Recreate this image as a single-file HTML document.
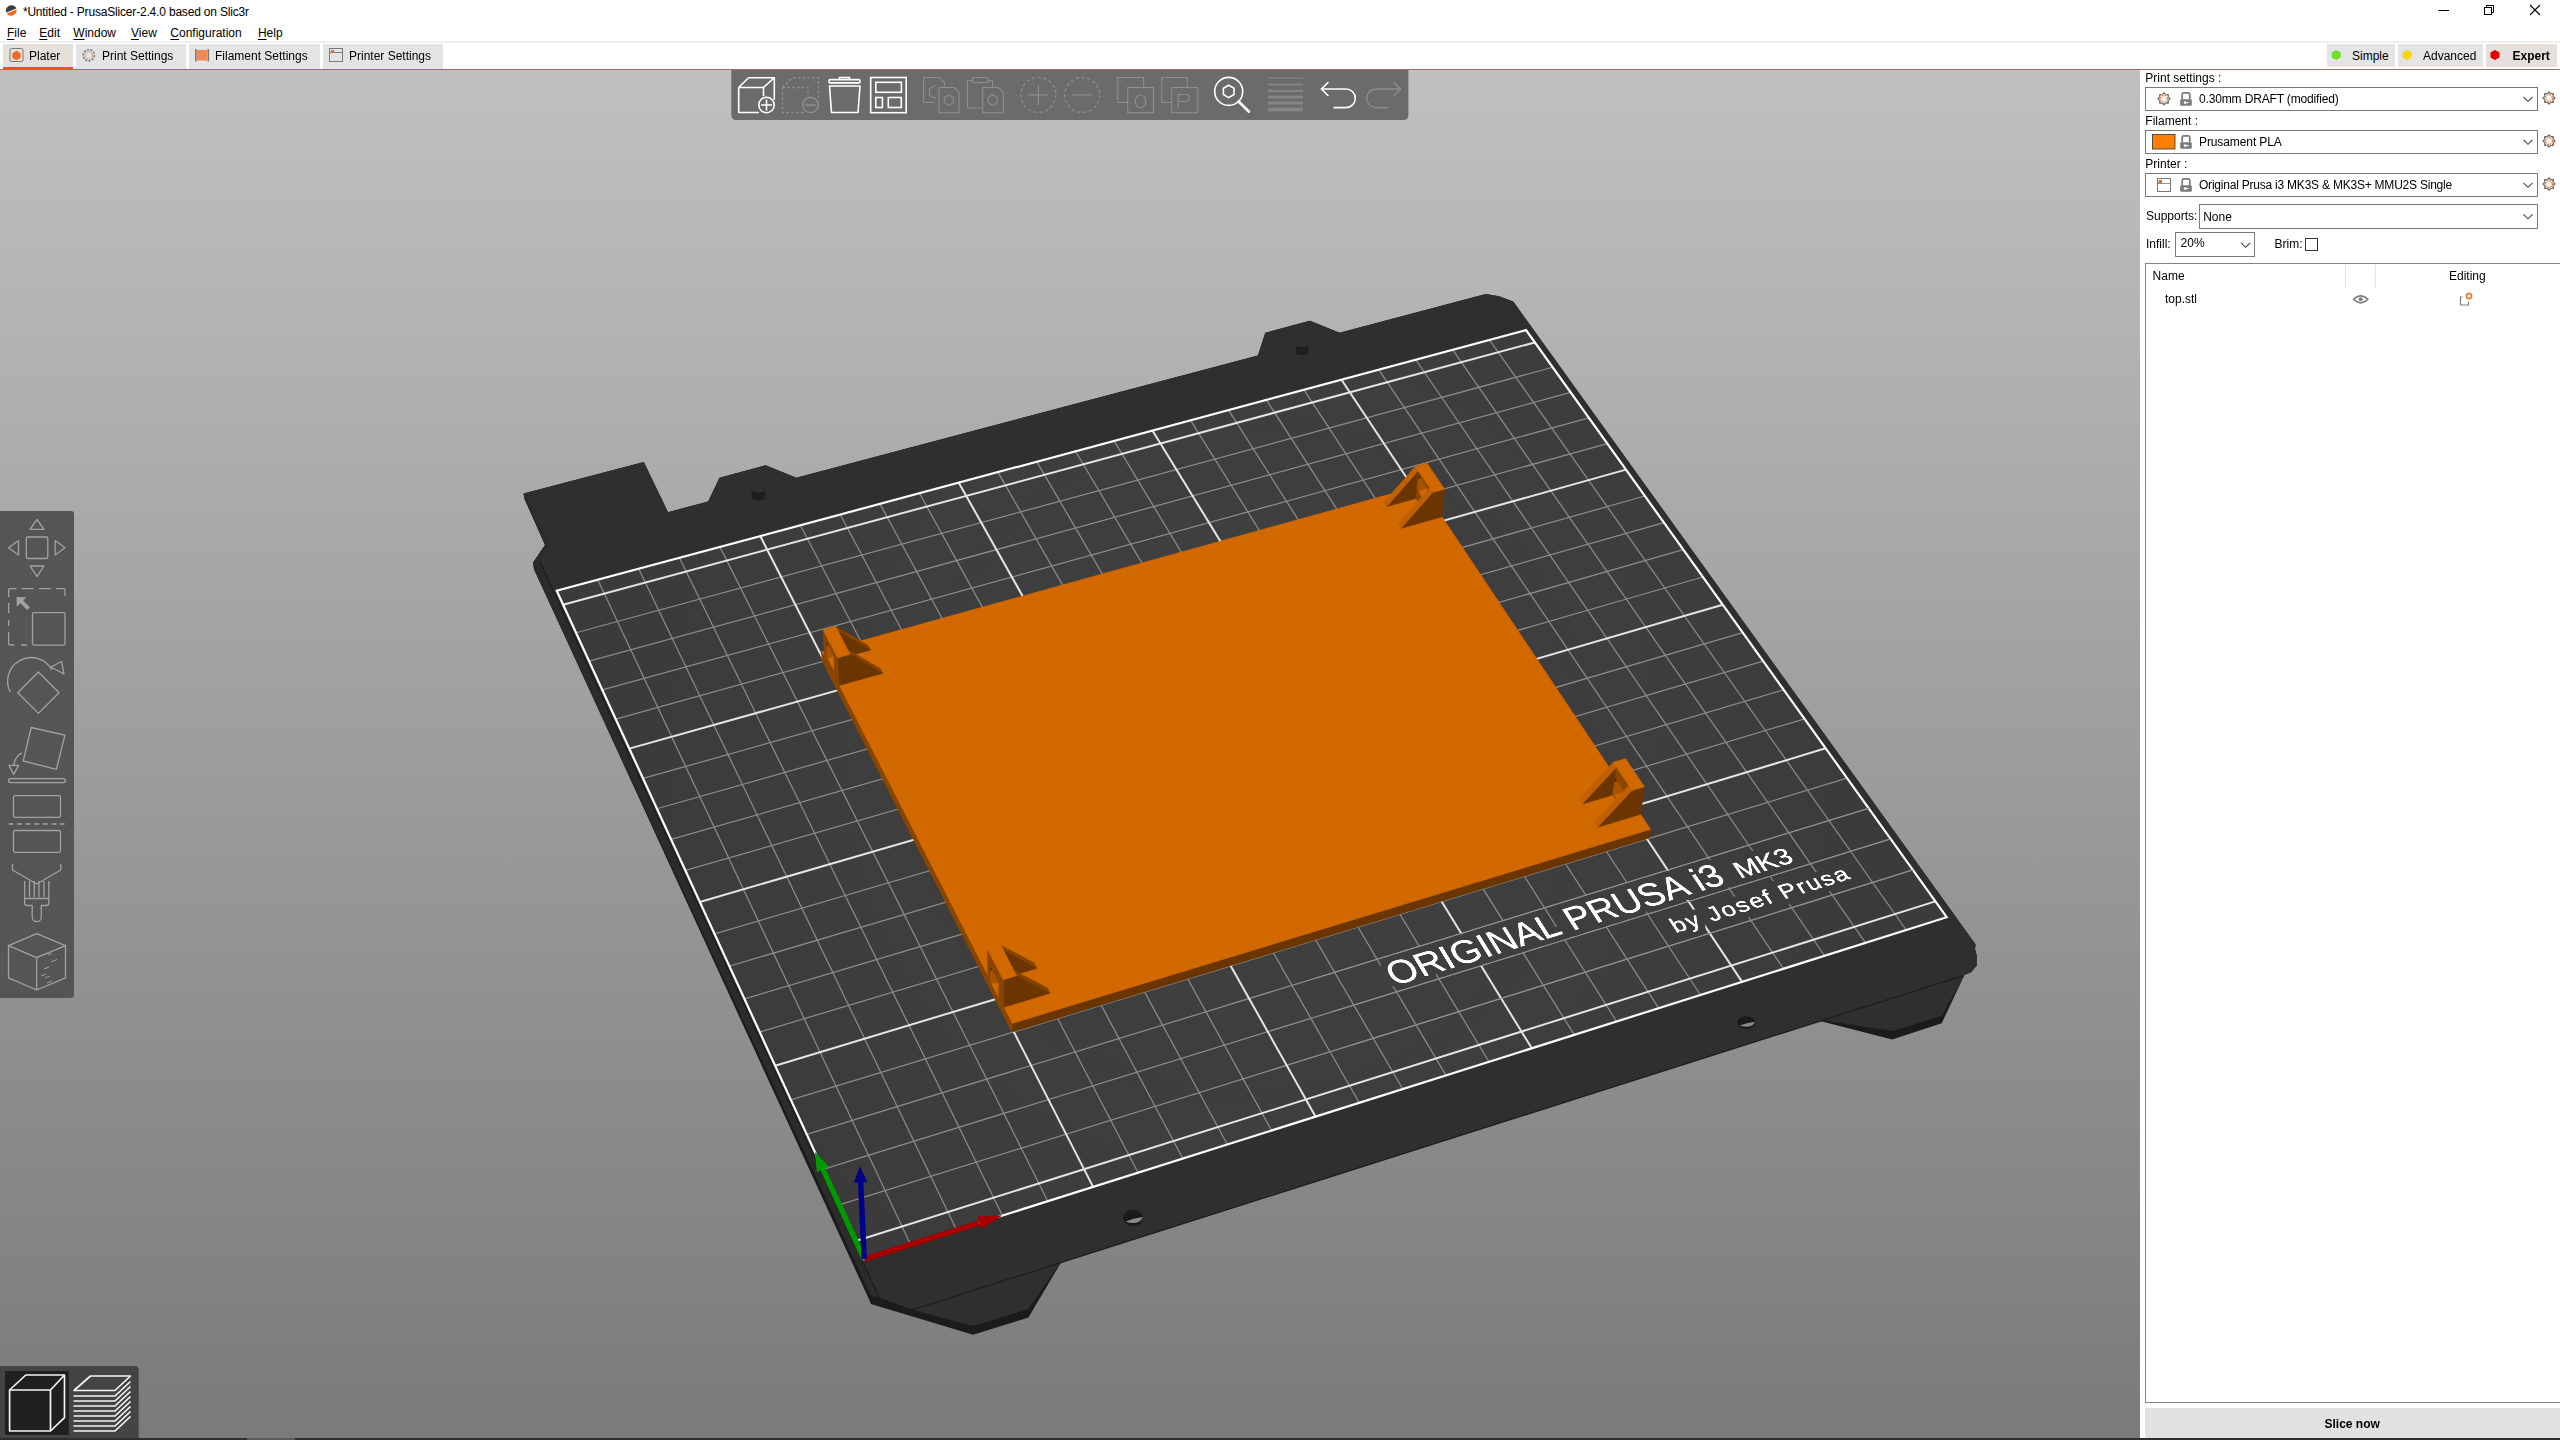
<!DOCTYPE html>
<html><head><meta charset="utf-8">
<style>
html,body{margin:0;padding:0;width:2560px;height:1440px;overflow:hidden;background:#fff;font-family:"Liberation Sans",sans-serif;font-size:12px;color:#000}
.abs{position:absolute}
.t{position:absolute;white-space:nowrap;line-height:1.117;color:#000}
u{text-decoration:underline;text-underline-offset:1.5px}
</style></head><body>
<div style="position:absolute;left:0;top:0;width:2140px;height:1440px;overflow:hidden">
<svg width="2140" height="1370" viewBox="0 70 2140 1370" style="position:absolute;left:0;top:70px">
<defs><linearGradient id="bg" x1="0" y1="0" x2="0" y2="1"><stop offset="0" stop-color="#c0c0c0"/><stop offset="1" stop-color="#7a7a7a"/></linearGradient><radialGradient id="spec" gradientUnits="userSpaceOnUse" cx="1250" cy="760" r="700"><stop offset="0" stop-color="#fff" stop-opacity="0.035"/><stop offset="1" stop-color="#fff" stop-opacity="0"/></radialGradient></defs>
<rect x="0" y="70" width="2140" height="1370" fill="url(#bg)"/>
<polygon points="523.6,493.5 643.8,461.9 668.0,512.2 708.2,501.4 719.5,477.8 765.6,465.3 796.3,477.8 1257.9,355.4 1265.3,332.7 1309.9,320.8 1339.6,332.7 1485.8,294.1 1499.1,296.3 1513.2,301.5 1975.6,944.4 1975.0,948.9 1976.7,955.6 1976.7,965.6 1971.1,972.2 1964.4,975.0 1941.7,1023.3 1892.2,1039.4 1820.0,1021.1 1061.2,1262.2 1028.4,1317.5 973.1,1334.8 870.9,1303.9 870.0,1301.6 534.0,569.2 533.3,562.2 545.1,544.9 524.3,498.3" fill="#1b1b1b"/>
<polygon points="523.6,493.5 643.8,461.9 668.0,512.2 708.2,501.4 719.5,477.8 765.6,465.3 796.3,477.8 1257.9,355.4 1265.3,332.7 1309.9,320.8 1339.6,332.7 1485.8,294.1 1499.1,296.3 1513.2,301.5 1975.6,944.4 1975.0,948.9 1976.7,955.6 1976.7,965.6 1971.1,972.2 1964.4,975.0 1942.2,1015.6 1893.3,1031.1 1822.2,1020.2 1060.3,1263.1 1028.4,1309.0 973.1,1326.0 913.0,1310.0 879.4,1297.8 870.9,1295.5 534.0,569.2 533.3,562.2 545.1,544.9 524.3,498.3" fill="#2f2f2f"/>
<polygon points="524.3,498.3 545.1,544.9 533.3,562.2 534.0,569.2 870.9,1295.5 879.4,1297.8 539.6,560.8 549.0,546.0 527.0,497.0" fill="#2b2b2b"/>
<polyline points="539.6,560.8 879.4,1297.8 886.9,1304.4 905.6,1310.0 915.0,1309.0 1963.3,975.6" fill="none" stroke="#1d1d1d" stroke-width="1.2"/>
<path d="M751.7,490 L751.7,497.8 A6.649999999999977,2.5 0 0 0 765,497.8 L765,490 Z" fill="#1e1e1e"/>
<ellipse cx="758.35" cy="490" rx="6.649999999999977" ry="2.2" fill="#303030"/>
<path d="M1295.8,345 L1295.8,352.5 A6.300000000000068,2.5 0 0 0 1308.4,352.5 L1308.4,345 Z" fill="#1e1e1e"/>
<ellipse cx="1302.1" cy="345" rx="6.300000000000068" ry="2.2" fill="#303030"/>
<ellipse cx="1133" cy="1217.8" rx="10" ry="8" fill="#1a1a1a"/>
<path d="M1125.5,1221.3999999999999 Q1133,1218.2 1143,1217.0 Q1139.0,1226.2 1125.5,1221.3999999999999 Z" fill="#8a8a8a"/>
<ellipse cx="1746.3" cy="1022.5" rx="9" ry="6.5" fill="#1a1a1a"/>
<path d="M1739.55,1025.425 Q1746.3,1022.825 1755.3,1021.85 Q1751.7,1029.325 1739.55,1025.425 Z" fill="#8a8a8a"/>
<polygon points="864.2,1259.2 1946.7,917.2 1526.0,330.1 556.7,590.8" fill="#3b3b3b"/>
<g><line x1="910.51" y1="1244.57" x2="597.82" y2="579.74" stroke="#8a8a8a" stroke-width="1.25"/><line x1="956.55" y1="1230.02" x2="638.73" y2="568.74" stroke="#8a8a8a" stroke-width="1.25"/><line x1="1002.33" y1="1215.56" x2="679.44" y2="557.79" stroke="#8a8a8a" stroke-width="1.25"/><line x1="1047.84" y1="1201.18" x2="719.94" y2="546.89" stroke="#8a8a8a" stroke-width="1.25"/><line x1="1138.09" y1="1172.67" x2="800.35" y2="525.27" stroke="#8a8a8a" stroke-width="1.25"/><line x1="1182.83" y1="1158.53" x2="840.25" y2="514.54" stroke="#8a8a8a" stroke-width="1.25"/><line x1="1227.32" y1="1144.48" x2="879.95" y2="503.86" stroke="#8a8a8a" stroke-width="1.25"/><line x1="1271.55" y1="1130.50" x2="919.46" y2="493.23" stroke="#8a8a8a" stroke-width="1.25"/><line x1="1359.27" y1="1102.79" x2="997.89" y2="472.14" stroke="#8a8a8a" stroke-width="1.25"/><line x1="1402.76" y1="1089.05" x2="1036.81" y2="461.67" stroke="#8a8a8a" stroke-width="1.25"/><line x1="1446.01" y1="1075.39" x2="1075.55" y2="451.25" stroke="#8a8a8a" stroke-width="1.25"/><line x1="1489.01" y1="1061.80" x2="1114.10" y2="440.88" stroke="#8a8a8a" stroke-width="1.25"/><line x1="1574.31" y1="1034.85" x2="1190.63" y2="420.30" stroke="#8a8a8a" stroke-width="1.25"/><line x1="1616.60" y1="1021.49" x2="1228.61" y2="410.08" stroke="#8a8a8a" stroke-width="1.25"/><line x1="1658.66" y1="1008.20" x2="1266.42" y2="399.92" stroke="#8a8a8a" stroke-width="1.25"/><line x1="1700.49" y1="994.99" x2="1304.04" y2="389.80" stroke="#8a8a8a" stroke-width="1.25"/><line x1="1783.46" y1="968.77" x2="1378.74" y2="369.71" stroke="#8a8a8a" stroke-width="1.25"/><line x1="1824.60" y1="955.77" x2="1415.82" y2="359.73" stroke="#8a8a8a" stroke-width="1.25"/><line x1="1865.52" y1="942.85" x2="1452.72" y2="349.81" stroke="#8a8a8a" stroke-width="1.25"/><line x1="1906.22" y1="929.99" x2="1489.45" y2="339.93" stroke="#8a8a8a" stroke-width="1.25"/><line x1="839.24" y1="1204.95" x2="1912.83" y2="869.93" stroke="#8a8a8a" stroke-width="1.25"/><line x1="822.89" y1="1169.41" x2="1890.62" y2="838.93" stroke="#8a8a8a" stroke-width="1.25"/><line x1="806.77" y1="1134.36" x2="1868.69" y2="808.33" stroke="#8a8a8a" stroke-width="1.25"/><line x1="790.87" y1="1099.80" x2="1847.04" y2="778.12" stroke="#8a8a8a" stroke-width="1.25"/><line x1="759.70" y1="1032.06" x2="1804.56" y2="718.84" stroke="#8a8a8a" stroke-width="1.25"/><line x1="744.43" y1="998.87" x2="1783.72" y2="689.76" stroke="#8a8a8a" stroke-width="1.25"/><line x1="729.37" y1="966.13" x2="1763.15" y2="661.04" stroke="#8a8a8a" stroke-width="1.25"/><line x1="714.51" y1="933.82" x2="1742.82" y2="632.68" stroke="#8a8a8a" stroke-width="1.25"/><line x1="685.36" y1="870.46" x2="1702.92" y2="577.00" stroke="#8a8a8a" stroke-width="1.25"/><line x1="671.07" y1="839.40" x2="1683.33" y2="549.67" stroke="#8a8a8a" stroke-width="1.25"/><line x1="656.96" y1="808.74" x2="1663.99" y2="522.66" stroke="#8a8a8a" stroke-width="1.25"/><line x1="643.04" y1="778.47" x2="1644.87" y2="495.98" stroke="#8a8a8a" stroke-width="1.25"/><line x1="615.72" y1="719.08" x2="1607.32" y2="443.58" stroke="#8a8a8a" stroke-width="1.25"/><line x1="602.31" y1="689.95" x2="1588.87" y2="417.84" stroke="#8a8a8a" stroke-width="1.25"/><line x1="589.08" y1="661.18" x2="1570.65" y2="392.40" stroke="#8a8a8a" stroke-width="1.25"/><line x1="576.01" y1="632.76" x2="1552.63" y2="367.26" stroke="#8a8a8a" stroke-width="1.25"/><line x1="1093.10" y1="1186.88" x2="760.25" y2="536.05" stroke="#e4e4e4" stroke-width="2.0"/><line x1="1315.53" y1="1116.61" x2="958.77" y2="482.66" stroke="#e4e4e4" stroke-width="2.0"/><line x1="1531.78" y1="1048.29" x2="1152.45" y2="430.57" stroke="#e4e4e4" stroke-width="2.0"/><line x1="1742.09" y1="981.84" x2="1341.48" y2="379.73" stroke="#e4e4e4" stroke-width="2.0"/><line x1="855.82" y1="1240.99" x2="1935.34" y2="901.34" stroke="#e4e4e4" stroke-width="2.0"/><line x1="775.18" y1="1065.70" x2="1825.67" y2="748.29" stroke="#e4e4e4" stroke-width="2.0"/><line x1="699.84" y1="901.93" x2="1722.75" y2="604.67" stroke="#e4e4e4" stroke-width="2.0"/><line x1="629.29" y1="748.59" x2="1625.98" y2="469.63" stroke="#e4e4e4" stroke-width="2.0"/><line x1="563.10" y1="604.70" x2="1534.83" y2="342.42" stroke="#e4e4e4" stroke-width="2.0"/></g>
<polygon points="864.2,1259.2 1946.7,917.2 1526.0,330.1 556.7,590.8" fill="none" stroke="#ffffff" stroke-width="2.2"/>
</svg>
<div style="position:absolute;left:0;top:0;width:2500px;height:2100px;transform-origin:0 0;transform:matrix3d(0.4263237603,-0.09592934385,0,2.529735277e-05,0.09327965718,0.2408440193,0,-6.150071078e-05,0,0,1,0,556.7,590.8,0,1)">
<svg width="2500" height="2100" viewBox="0 0 2500 2100">
<g font-family="Liberation Sans">
<g fill="#3b3b3b" stroke="#3b3b3b" stroke-width="34" stroke-linejoin="round">
<text x="1303" y="1833" font-size="92" textLength="800" lengthAdjust="spacingAndGlyphs">ORIGINAL PRUSA i3</text>
<text x="2136" y="1832" font-size="66" textLength="136" lengthAdjust="spacingAndGlyphs">MK3</text>
<text x="1932" y="1922" font-size="57" textLength="430" lengthAdjust="spacing">by Josef Prusa</text>
</g>
<g stroke="#8a8a8a" stroke-width="2.8">
<line x1="1150" y1="1950" x2="2500" y2="1950"/>
<line x1="1150" y1="1850" x2="2500" y2="1850"/>
<line x1="1150" y1="1750" x2="2500" y2="1750"/>
</g>
<g fill="#fff" stroke="#fff" stroke-width="1.2" stroke-linejoin="round">
<text x="1303" y="1833" font-size="92" textLength="800" lengthAdjust="spacingAndGlyphs">ORIGINAL PRUSA i3</text>
<text x="2136" y="1832" font-size="66" textLength="136" lengthAdjust="spacingAndGlyphs">MK3</text>
<text x="1932" y="1922" font-size="57" textLength="430" lengthAdjust="spacing">by Josef Prusa</text>
</g>
</g></svg></div>
<svg width="2140" height="1370" viewBox="0 70 2140 1370" style="position:absolute;left:0;top:70px">
<defs><radialGradient id="spec" gradientUnits="userSpaceOnUse" cx="1250" cy="760" r="700"><stop offset="0" stop-color="#fff" stop-opacity="0.035"/><stop offset="1" stop-color="#fff" stop-opacity="0"/></radialGradient></defs>
<polygon points="864.2,1259.2 1946.7,917.2 1526.0,330.1 556.7,590.8" fill="url(#spec)"/>
<polygon points="1011.90,1032.09 1649.29,837.98 1650.53,829.35 1011.84,1023.51" fill="#6a3500" stroke="#6a3500" stroke-width="0.7" stroke-linejoin="round"/>
<polygon points="1650.53,829.35 1011.84,1023.51 821.56,651.80 1421.11,485.61" fill="#d26900" stroke="#d26900" stroke-width="0.7" stroke-linejoin="round"/>
<polygon points="1011.84,1023.51 1011.90,1032.09 821.99,660.46 821.56,651.80" fill="#8a4500" stroke="#8a4500" stroke-width="0.7" stroke-linejoin="round"/>
<polygon points="1427.49,495.17 1386.80,506.48 1418.26,470.65 1429.83,467.45" fill="#6a3500" stroke="#6a3500" stroke-width="0.7" stroke-linejoin="round"/>
<polygon points="1386.80,506.48 1418.26,470.65 1415.41,466.39 1383.99,502.20" fill="#c06000" stroke="#c06000" stroke-width="0.7" stroke-linejoin="round"/>
<polygon points="1418.26,470.65 1429.83,467.45 1426.97,463.20 1415.41,466.39" fill="#d26900" stroke="#d26900" stroke-width="0.7" stroke-linejoin="round"/>
<polygon points="1429.90,488.04 1427.55,515.76 1415.99,498.36 1418.26,470.65" fill="#8a4500" stroke="#8a4500" stroke-width="0.7" stroke-linejoin="round"/>
<polygon points="1425.85,502.09 1417.66,489.78 1418.83,475.44 1427.06,487.74" fill="#a55300" stroke="#a55300" stroke-width="0.7" stroke-linejoin="round"/>
<polygon points="1425.14,501.01 1418.90,491.65 1426.77,488.72" fill="#cf6900" stroke="#cf6900" stroke-width="0.7" stroke-linejoin="round"/>
<polygon points="1420.26,477.57 1418.83,475.44 1418.58,478.56" fill="#4a2500" stroke="#4a2500" stroke-width="0.7" stroke-linejoin="round"/>
<polygon points="1427.55,515.76 1439.08,512.54 1441.50,484.82 1429.90,488.04" fill="#6a3500" stroke="#6a3500" stroke-width="0.7" stroke-linejoin="round"/>
<polygon points="1441.50,484.82 1429.90,488.04 1418.26,470.65 1429.83,467.45" fill="#d26900" stroke="#d26900" stroke-width="0.7" stroke-linejoin="round"/>
<polygon points="1441.95,516.84 1401.10,528.26 1432.78,492.34 1444.39,489.12" fill="#6a3500" stroke="#6a3500" stroke-width="0.7" stroke-linejoin="round"/>
<polygon points="1401.10,528.26 1432.78,492.34 1429.90,488.04 1398.26,523.94" fill="#c06000" stroke="#c06000" stroke-width="0.7" stroke-linejoin="round"/>
<polygon points="1432.78,492.34 1444.39,489.12 1441.50,484.82 1429.90,488.04" fill="#d26900" stroke="#d26900" stroke-width="0.7" stroke-linejoin="round"/>
<polygon points="870.53,649.97 837.96,630.92 835.59,626.34 868.14,645.41" fill="#864300" stroke="#864300" stroke-width="0.7" stroke-linejoin="round"/>
<polygon points="826.84,662.11 870.53,649.97 837.96,630.92 825.50,634.36" fill="#6a3500" stroke="#6a3500" stroke-width="0.7" stroke-linejoin="round"/>
<polygon points="825.50,634.36 826.84,662.11 824.49,657.53 823.13,629.77" fill="#8a4500" stroke="#8a4500" stroke-width="0.7" stroke-linejoin="round"/>
<polygon points="835.14,653.10 836.43,680.85 826.84,662.11 825.50,634.36" fill="#8a4500" stroke="#8a4500" stroke-width="0.7" stroke-linejoin="round"/>
<polygon points="834.00,669.98 827.20,656.73 826.51,642.39 833.32,655.64" fill="#a55300" stroke="#a55300" stroke-width="0.7" stroke-linejoin="round"/>
<polygon points="837.96,630.92 825.50,634.36 823.13,629.77 835.59,626.34" fill="#d26900" stroke="#d26900" stroke-width="0.7" stroke-linejoin="round"/>
<polygon points="833.40,668.83 828.24,658.74 833.23,656.60" fill="#cf6900" stroke="#cf6900" stroke-width="0.7" stroke-linejoin="round"/>
<polygon points="827.69,644.69 826.51,642.39 826.66,645.52" fill="#4a2500" stroke="#4a2500" stroke-width="0.7" stroke-linejoin="round"/>
<polygon points="882.68,673.21 850.05,654.26 847.65,649.63 880.27,668.60" fill="#864300" stroke="#864300" stroke-width="0.7" stroke-linejoin="round"/>
<polygon points="836.43,680.85 848.86,677.38 847.65,649.63 835.14,653.10" fill="#6a3500" stroke="#6a3500" stroke-width="0.7" stroke-linejoin="round"/>
<polygon points="838.80,685.48 882.68,673.21 850.05,654.26 837.53,657.73" fill="#6a3500" stroke="#6a3500" stroke-width="0.7" stroke-linejoin="round"/>
<polygon points="837.53,657.73 838.80,685.48 836.43,680.85 835.14,653.10" fill="#8a4500" stroke="#8a4500" stroke-width="0.7" stroke-linejoin="round"/>
<polygon points="847.65,649.63 835.14,653.10 825.50,634.36 837.96,630.92" fill="#d26900" stroke="#d26900" stroke-width="0.7" stroke-linejoin="round"/>
<polygon points="850.05,654.26 837.53,657.73 835.14,653.10 847.65,649.63" fill="#d26900" stroke="#d26900" stroke-width="0.7" stroke-linejoin="round"/>
<polygon points="1625.03,791.15 1582.16,804.06 1616.62,767.12 1628.81,763.48" fill="#6a3500" stroke="#6a3500" stroke-width="0.7" stroke-linejoin="round"/>
<polygon points="1582.16,804.06 1616.62,767.12 1613.37,762.27 1578.96,799.19" fill="#c06000" stroke="#c06000" stroke-width="0.7" stroke-linejoin="round"/>
<polygon points="1628.86,785.42 1625.07,813.08 1612.93,794.80 1616.62,767.12" fill="#8a4500" stroke="#8a4500" stroke-width="0.7" stroke-linejoin="round"/>
<polygon points="1622.48,806.65 1613.17,792.65 1615.08,778.37 1624.43,792.38" fill="#a55300" stroke="#a55300" stroke-width="0.7" stroke-linejoin="round"/>
<polygon points="1621.67,805.43 1614.59,794.77 1624.05,793.32" fill="#cf6900" stroke="#cf6900" stroke-width="0.7" stroke-linejoin="round"/>
<polygon points="1616.70,780.80 1615.08,778.37 1614.66,781.48" fill="#4a2500" stroke="#4a2500" stroke-width="0.7" stroke-linejoin="round"/>
<polygon points="1616.62,767.12 1628.81,763.48 1625.55,758.63 1613.37,762.27" fill="#d26900" stroke="#d26900" stroke-width="0.7" stroke-linejoin="round"/>
<polygon points="1625.07,813.08 1637.22,809.41 1641.09,781.75 1628.86,785.42" fill="#6a3500" stroke="#6a3500" stroke-width="0.7" stroke-linejoin="round"/>
<polygon points="1641.09,781.75 1628.86,785.42 1616.62,767.12 1628.81,763.48" fill="#d26900" stroke="#d26900" stroke-width="0.7" stroke-linejoin="round"/>
<polygon points="1640.49,814.30 1597.44,827.34 1632.14,790.32 1644.38,786.64" fill="#6a3500" stroke="#6a3500" stroke-width="0.7" stroke-linejoin="round"/>
<polygon points="1597.44,827.34 1632.14,790.32 1628.86,785.42 1594.21,822.42" fill="#c06000" stroke="#c06000" stroke-width="0.7" stroke-linejoin="round"/>
<polygon points="1632.14,790.32 1644.38,786.64 1641.09,781.75 1628.86,785.42" fill="#d26900" stroke="#d26900" stroke-width="0.7" stroke-linejoin="round"/>
<polygon points="1036.89,968.18 1003.51,950.59 1000.79,945.35 1034.16,962.95" fill="#864300" stroke="#864300" stroke-width="0.7" stroke-linejoin="round"/>
<polygon points="990.64,982.10 1036.89,968.18 1003.51,950.59 990.30,954.55" fill="#6a3500" stroke="#6a3500" stroke-width="0.7" stroke-linejoin="round"/>
<polygon points="990.30,954.55 990.64,982.10 987.95,976.85 987.59,949.29" fill="#8a4500" stroke="#8a4500" stroke-width="0.7" stroke-linejoin="round"/>
<polygon points="1000.50,974.36 1000.77,1001.89 990.64,982.10 990.30,954.55" fill="#8a4500" stroke="#8a4500" stroke-width="0.7" stroke-linejoin="round"/>
<polygon points="998.35,996.66 990.59,981.50 990.41,967.30 998.20,982.47" fill="#a55300" stroke="#a55300" stroke-width="0.7" stroke-linejoin="round"/>
<polygon points="997.67,995.33 991.76,983.80 998.04,983.37" fill="#cf6900" stroke="#cf6900" stroke-width="0.7" stroke-linejoin="round"/>
<polygon points="991.76,969.93 990.41,967.30 990.45,970.39" fill="#4a2500" stroke="#4a2500" stroke-width="0.7" stroke-linejoin="round"/>
<polygon points="1003.51,950.59 990.30,954.55 987.59,949.29 1000.79,945.35" fill="#d26900" stroke="#d26900" stroke-width="0.7" stroke-linejoin="round"/>
<polygon points="1049.94,993.13 1016.50,975.68 1013.75,970.37 1047.18,987.85" fill="#864300" stroke="#864300" stroke-width="0.7" stroke-linejoin="round"/>
<polygon points="1000.77,1001.89 1013.93,997.91 1013.75,970.37 1000.50,974.36" fill="#6a3500" stroke="#6a3500" stroke-width="0.7" stroke-linejoin="round"/>
<polygon points="1003.48,1007.19 1049.94,993.13 1016.50,975.68 1003.23,979.67" fill="#6a3500" stroke="#6a3500" stroke-width="0.7" stroke-linejoin="round"/>
<polygon points="1003.23,979.67 1003.48,1007.19 1000.77,1001.89 1000.50,974.36" fill="#8a4500" stroke="#8a4500" stroke-width="0.7" stroke-linejoin="round"/>
<polygon points="1013.75,970.37 1000.50,974.36 990.30,954.55 1003.51,950.59" fill="#d26900" stroke="#d26900" stroke-width="0.7" stroke-linejoin="round"/>
<polygon points="1016.50,975.68 1003.23,979.67 1000.50,974.36 1013.75,970.37" fill="#d26900" stroke="#d26900" stroke-width="0.7" stroke-linejoin="round"/>
<polygon points="866.7,1258.1 825.3,1168.3 820.5,1170.5 861.7,1260.3" fill="#009a00"/><polygon points="828.9,1166.7 814.8,1151.8 816.9,1172.2" fill="#009a00"/>
<polygon points="865.0,1261.8 980.3,1225.4 978.7,1220.2 863.4,1256.6" fill="#a80000"/><polygon points="981.5,1229.1 1002.3,1215.6 977.5,1216.5" fill="#a80000"/>
<polygon points="866.9,1259.1 863.4,1182.1 857.9,1182.3 861.5,1259.3" fill="#000088"/><polygon points="867.4,1181.9 859.9,1166.4 853.8,1182.5" fill="#000088"/>
</svg>
</div>
<svg class="abs" style="left:0;top:0" width="2140" height="1440" viewBox="0 0 2140 1440"><path d="M731.3,70 H1408.4 V115 Q1408.4,120 1403.4,120 H736.3 Q731.3,120 731.3,115 Z" fill="#6b6b6b"/><g fill="none" stroke="#ffffff" stroke-width="1.6" stroke-linejoin="round"><path d="M738.7,87.5 V112.5 H759"/><path d="M738.7,87.5 H763.5 V96"/><path d="M738.7,87.5 L748.5,77.7 H774.3 V100"/><path d="M763.5,87.5 L774.3,77.7"/><circle cx="766.5" cy="105" r="7.7"/><path d="M766.5,99.5 V110.5 M761,105 H772"/></g><g fill="none" stroke="#8e8e8e" stroke-width="1.4" stroke-dasharray="2.6 2.2"><path d="M782.5,87.5 V112.5 H804"/><path d="M782.5,87.5 H808 V96"/><path d="M782.5,87.5 L792.5,77.7 H818.5 V100"/></g><circle cx="810.5" cy="105" r="7.7" fill="none" stroke="#8e8e8e" stroke-width="1.4"/><path d="M805,105 H816" stroke="#8e8e8e" stroke-width="1.4"/><g fill="none" stroke="#ffffff" stroke-width="1.6" stroke-linejoin="round"><rect x="829" y="79.6" width="31" height="3.3" rx="1.2"/><path d="M839.5,79.6 V77.5 H849.5 V79.6"/><path d="M829.5,86 H860 L858,112.5 H831.5 Z"/></g><g fill="none" stroke="#ffffff" stroke-width="1.6"><rect x="870.7" y="77.5" width="35.5" height="35.2"/><rect x="875.8" y="82.3" width="25.6" height="10"/><rect x="875.8" y="97.5" width="6.6" height="10"/><rect x="888.3" y="97.5" width="13" height="10"/></g><g fill="none" stroke="#8e8e8e" stroke-width="1.1"><path d="M935,102.5 H923.6 V77.5 H939.5 L944.4,82.4 V87"/><path d="M936,85.6 L929.5,88.6 V95.5 L936,98.5"/><path d="M939,87.5 H954.2 L959.1,92.4 V112.7 H939 Z"/><polygon points="948.8,95 953.3,97.6 953.3,102.8 948.8,105.4 944.3,102.8 944.3,97.6"/></g><g fill="none" stroke="#8e8e8e" stroke-width="1.1"><path d="M982.5,108 H967.5 V80.5 H972.5 M988.5,80.5 H992.5 V87"/><rect x="972.5" y="77.5" width="16" height="5" rx="1.5"/><path d="M982.8,87.5 H998.5 L1003.4,92.4 V112.7 H982.8 Z"/><polygon points="992.7,95 997.2,97.6 997.2,102.8 992.7,105.4 988.2,102.8 988.2,97.6"/></g><g fill="none" stroke="#8e8e8e" stroke-width="1.2"><circle cx="1038.4" cy="94.9" r="17.5" stroke-dasharray="3.2 2.6"/><path d="M1038.4,85 V104.8 M1028.5,94.9 H1048.3"/><circle cx="1082.2" cy="94.9" r="17.5" stroke-dasharray="3.2 2.6"/><path d="M1072.3,94.9 H1092.1"/></g><g fill="none" stroke="#8e8e8e" stroke-width="1.1"><path d="M1127.7,102.5 H1117.8 V77.5 H1143.6 V87.5"/><rect x="1127.7" y="87.5" width="25.8" height="25.2"/><rect x="1135.5" y="95" width="10" height="12.5" rx="5"/><path d="M1171.7,102.5 H1161.7 V77.5 H1187.3 V87.5"/><rect x="1171.7" y="87.5" width="26" height="25.2"/><path d="M1178,108 V94.5 H1186 A3.5,3.5 0 0 1 1186,101.5 H1178"/></g><g fill="none" stroke="#ffffff" stroke-width="1.6"><circle cx="1228.7" cy="91.4" r="14"/><polygon points="1228.7,85.2 1234,88.3 1234,94.5 1228.7,97.6 1223.4,94.5 1223.4,88.3"/><path d="M1238.6,101.5 L1249,111.7" stroke-width="2.6" stroke-linecap="round"/></g><rect x="1268" y="77.4" width="35" height="1.2" fill="#858585"/><rect x="1268" y="83.6" width="35" height="1.8" fill="#858585"/><rect x="1268" y="89.9" width="35" height="2.2" fill="#858585"/><rect x="1268" y="95.6" width="35" height="2.8" fill="#858585"/><rect x="1268" y="101.4" width="35" height="3.2" fill="#858585"/><rect x="1268" y="107.6" width="35" height="3.8" fill="#858585"/><g fill="none" stroke="#ffffff" stroke-width="1.6" stroke-linecap="round" stroke-linejoin="round"><path d="M1328,82.5 L1321.5,89 L1328,95.5"/><path d="M1321.5,89 H1346 A9.3,9.3 0 0 1 1346,107.6 H1334"/></g><g fill="none" stroke="#8e8e8e" stroke-width="1.3" stroke-linecap="round" stroke-linejoin="round"><path d="M1394,82.5 L1400.5,89 L1394,95.5"/><path d="M1400.5,89 H1376 A9.3,9.3 0 0 0 1376,107.6 H1388"/></g><path d="M0,511 H71 Q74,511 74,514 V995 Q74,998 71,998 H0 Z" fill="#555555"/><g fill="none" stroke="#a2a2a2" stroke-width="1.3" stroke-linejoin="round"><polygon points="37,519.5 44,529.3 30,529.3"/><rect x="26.3" y="537" width="21.5" height="21.5" rx="1.5"/><polygon points="8.5,547.8 18.5,540.6 18.5,555"/><polygon points="65,547.8 55.2,540.6 55.2,555"/><polygon points="37,576.3 44,566 30,566"/><path d="M8.6,597 V590 A1.5,1.5 0 0 1 10,588.6 H16.5 M21.5,588.6 H33.5 M39,588.6 H51 M56,588.6 H63.7 A1.5,1.5 0 0 1 65,590 V596 M8.6,603 V613 M8.6,620 V626 M8.6,632 V643.5 A1.5,1.5 0 0 0 10,645 H14.5 M21,645 H27"/><rect x="32.5" y="612.6" width="32.5" height="32.5" rx="1.5"/><polygon points="16.5,597 26.5,597.3 23.3,600.6 29.9,607.2 27.2,609.9 20.6,603.3 16.8,606.6" fill="#a2a2a2" stroke="none"/><path d="M10.4,692.3 A23,23 0 0 1 52,670"/><polygon points="51,667 61.5,661.5 64,674"/><polygon points="38.4,672 59,692.7 38.4,713.4 17.8,692.7"/><polygon points="31.2,727.5 64.9,735.1 56.4,769.4 23.2,761"/><path d="M21.8,752.9 Q14.5,757 13.7,766"/><polygon points="9,765.4 18.5,765.4 13.7,774.4"/><rect x="8.5" y="778.6" width="57" height="4" rx="2"/><rect x="13.5" y="795.7" width="47" height="21.6" rx="1.5"/><rect x="13.5" y="830.5" width="47" height="21.8" rx="1.5"/><path d="M8.5,824 H64.5" stroke-dasharray="5 3.6"/><path d="M12.5,864 V870 L36.7,884 L60.8,870 V864"/><path d="M24.6,881 V898.5 H48.8 V881 M29.5,881 V897 M34.3,881 V897 M39,881 V897 M44,881 V897 M24.6,898.5 V903 A2.5,2.5 0 0 0 27,905.5 H32.2 V917 A4.5,4.5 0 0 0 41.3,917 V905.5 H46.5 A2.5,2.5 0 0 0 48.8,903 V898.5"/><polygon points="8.5,945.7 36.7,933.6 65.5,945.7 65.5,977.9 36.7,990 8.5,977.9"/><path d="M8.5,945.7 L36.7,957.7 L65.5,945.7 M36.7,957.7 V990"/><path d="M48,955 L52,953.3 M51,962 L57,959.5 M44,969 L49,967 M41,976 L46,974 M45,978 L50,976 M47,983 L52,981" stroke-width="1"/></g><path d="M0,1366 H134.5 Q138.7,1366 138.7,1370 V1438 H0 Z" fill="#444444"/><rect x="5" y="1371" width="63.8" height="63.8" fill="#202020"/><g fill="none" stroke="#f4f4f4" stroke-width="1.7" stroke-linejoin="round"><path d="M9.6,1390 L25.8,1375 H64.5 V1417.6 L50.5,1431 H9.6 Z"/><path d="M9.6,1390 H50.5 V1431 M50.5,1390 L64.5,1375"/></g><g fill="none" stroke="#f4f4f4" stroke-width="1.7" stroke-linejoin="round"><path d="M74,1390.5 L90.5,1376 H130.5 L115,1390.5 Z"/><path d="M73.5,1396 H115 L130.5,1381.5"/><path d="M73.5,1401 H115 L130.5,1386.5"/><path d="M73.5,1406 H115 L130.5,1391.5"/><path d="M73.5,1411 H115 L130.5,1396.5"/><path d="M73.5,1416 H115 L130.5,1401.5"/><path d="M73.5,1421 H115 L130.5,1406.5"/><path d="M73.5,1426 H115 L130.5,1411.5"/><path d="M73.5,1431 H115 L130.5,1416.5"/></g></svg>
<div class="abs" style="left:0;top:0;width:2560px;height:42px;background:#fff"></div>
<svg class="abs" style="left:4px;top:4px" width="14" height="14" viewBox="0 0 14 14"><path d="M7.5 1.2 A5.6 5.6 0 0 0 2.2 8.6 L12.4 4.6 A5.6 5.6 0 0 0 7.5 1.2Z" fill="#3b3b3b"/><path d="M2.6 9.6 A5.6 5.6 0 0 0 12.6 5.6 Z" fill="#ed6b21"/></svg>
<div class="t " style="left:22.9px;top:5.9px;font-size:12px;letter-spacing:-0.18px">*Untitled - PrusaSlicer-2.4.0 based on Slic3r</div>
<svg class="abs" style="left:2430px;top:0" width="130" height="22" viewBox="2430 0 130 22"><line x1="2438.5" y1="10.5" x2="2449" y2="10.5" stroke="#000" stroke-width="1"/><rect x="2484.5" y="7.5" width="7" height="7" fill="none" stroke="#000" stroke-width="1"/><path d="M2486.5 7.5 V5.5 H2493.5 V12.5 H2491.5" fill="none" stroke="#000" stroke-width="1"/><path d="M2530 5 L2540 15 M2540 5 L2530 15" stroke="#000" stroke-width="1.1"/></svg>
<div class="t " style="left:7.0px;top:27.0px;font-size:12px;"><u>F</u>ile</div>
<div class="t " style="left:39.3px;top:27.0px;font-size:12px;"><u>E</u>dit</div>
<div class="t " style="left:73.3px;top:27.0px;font-size:12px;"><u>W</u>indow</div>
<div class="t " style="left:131.0px;top:27.0px;font-size:12px;"><u>V</u>iew</div>
<div class="t " style="left:170.3px;top:27.0px;font-size:12px;"><u>C</u>onfiguration</div>
<div class="t " style="left:257.9px;top:27.0px;font-size:12px;"><u>H</u>elp</div>
<div class="abs" style="left:0;top:41px;width:2560px;height:2px;background:#f0f0f0"></div>
<div class="abs" style="left:3px;top:44px;width:69.5px;height:25px;background:#e6e0dc"></div>
<div class="abs" style="left:76px;top:44px;width:109.5px;height:25px;background:#e4e4e4"></div>
<div class="abs" style="left:189px;top:44px;width:130.5px;height:25px;background:#e4e4e4"></div>
<div class="abs" style="left:323px;top:44px;width:119.5px;height:25px;background:#e4e4e4"></div>
<div class="abs" style="left:3px;top:66.5px;width:69.5px;height:2.5px;background:#fe5000"></div>
<div class="abs" style="left:0;top:68.6px;width:2560px;height:1.4px;background:#fe5000"></div>
<svg class="abs" style="left:0;top:44px" width="460" height="25" viewBox="0 44 460 25"><rect x="10" y="48.5" width="13" height="13" rx="1.5" fill="none" stroke="#7a7a7a" stroke-width="1"/><polygon points="16.5,50.8 20.6,53.2 20.6,57.9 16.5,60.3 12.4,57.9 12.4,53.2" fill="#ed6b21"/><circle cx="88.8" cy="55.3" r="5.6" fill="none" stroke="#808080" stroke-width="1.6" stroke-dasharray="2.2 1.2"/><circle cx="88.8" cy="55.3" r="3.6" fill="none" stroke="#ed6b21" stroke-width="1" stroke-dasharray="1.3 0.8"/><rect x="195" y="49" width="1.6" height="12.5" fill="#7a7a7a"/><rect x="207.5" y="49" width="1.6" height="12.5" fill="#7a7a7a"/><rect x="196.6" y="50" width="10.9" height="10.5" fill="#ed8a50"/><rect x="329.5" y="48.5" width="13" height="13" fill="none" stroke="#7a7a7a" stroke-width="1"/><line x1="329.5" y1="52.5" x2="342.5" y2="52.5" stroke="#7a7a7a" stroke-width="1"/><rect x="331" y="50" width="3" height="3" fill="#ed6b21"/></svg>
<div class="t " style="left:29.0px;top:49.9px;font-size:12px;">Plater</div>
<div class="t " style="left:102.0px;top:49.9px;font-size:12px;">Print Settings</div>
<div class="t " style="left:215.0px;top:49.9px;font-size:12px;">Filament Settings</div>
<div class="t " style="left:349.0px;top:49.9px;font-size:12px;">Printer Settings</div>
<div class="abs" style="left:2327px;top:44px;width:67.75px;height:23px;background:#e4e4e4"></div>
<div class="abs" style="left:2398px;top:44px;width:84.75px;height:23px;background:#e4e4e4"></div>
<div class="abs" style="left:2486px;top:44px;width:71.00px;height:23px;background:#e6e0dc"></div>
<svg class="abs" style="left:2320px;top:44px" width="240" height="24" viewBox="2320 44 240 24"><polygon points="2336.2,50 2340.7,52.5 2340.7,57.5 2336.2,60 2331.7,57.5 2331.7,52.5" fill="#6ee02a"/><polygon points="2407.2,50 2411.7,52.5 2411.7,57.5 2407.2,60 2402.7,57.5 2402.7,52.5" fill="#ffd200"/><polygon points="2495,50 2499.5,52.5 2499.5,57.5 2495,60 2490.5,57.5 2490.5,52.5" fill="#e00000"/></svg>
<div class="t " style="left:2352.0px;top:50.1px;font-size:12px;">Simple</div>
<div class="t " style="left:2423.0px;top:50.1px;font-size:12px;">Advanced</div>
<div class="t " style="left:2512.5px;top:50.1px;font-size:12px;font-weight:bold">Expert</div>
<div class="abs" style="left:2140px;top:70px;width:420px;height:1370px;background:#fff"></div>
<div class="t " style="left:2145.3px;top:72.0px;font-size:12px;">Print settings :</div>
<div class="abs" style="left:2145px;top:87px;width:391px;height:22px;border:1px solid #7a7a7a;background:#fff"></div>
<div class="t " style="left:2145.3px;top:115.1px;font-size:12px;">Filament :</div>
<div class="abs" style="left:2145px;top:130px;width:391px;height:22px;border:1px solid #7a7a7a;background:#fff"></div>
<div class="t " style="left:2145.3px;top:157.5px;font-size:12px;">Printer :</div>
<div class="abs" style="left:2145px;top:173px;width:391px;height:22px;border:1px solid #7a7a7a;background:#fff"></div>
<div class="t " style="left:2146.0px;top:209.9px;font-size:12px;">Supports:</div>
<div class="abs" style="left:2199px;top:204px;width:337px;height:23px;border:1px solid #7a7a7a;background:#fff"></div>
<div class="t " style="left:2146.0px;top:237.9px;font-size:12px;">Infill:</div>
<div class="abs" style="left:2175px;top:232px;width:78px;height:23px;border:1px solid #7a7a7a;background:#fff"></div>
<div class="t " style="left:2274.5px;top:237.9px;font-size:12px;">Brim:</div>
<div class="abs" style="left:2305px;top:238px;width:11px;height:11px;border:1px solid #333;background:#fff"></div>
<div class="t " style="left:2199.0px;top:92.9px;font-size:12px;letter-spacing:-0.15px">0.30mm DRAFT (modified)</div>
<div class="t " style="left:2199.0px;top:136.4px;font-size:12px;letter-spacing:-0.1px">Prusament PLA</div>
<div class="t " style="left:2199.0px;top:179.2px;font-size:12px;letter-spacing:-0.22px">Original Prusa i3 MK3S &amp; MK3S+ MMU2S Single</div>
<div class="t " style="left:2203.2px;top:210.8px;font-size:12px;">None</div>
<div class="t " style="left:2180.6px;top:237.0px;font-size:12px;">20%</div>
<svg class="abs" style="left:2140px;top:70px" width="420" height="220" viewBox="2140 70 420 220"><polygon points="2164.00,91.90 2161.97,93.90 2159.12,93.92 2159.10,96.77 2157.10,98.80 2159.10,100.83 2159.12,103.68 2161.97,103.70 2164.00,105.70 2166.03,103.70 2168.88,103.68 2168.90,100.83 2170.90,98.80 2168.90,96.77 2168.88,93.92 2166.03,93.90" fill="#707070"/><circle cx="2164" cy="98.8" r="4.50" fill="#fff"/><circle cx="2164" cy="98.8" r="3.4" fill="none" stroke="#ed6b21" stroke-width="1.3" stroke-dasharray="1.67 1.0"/><path d="M2182.2,99.5 V94.5 Q2182.2,92.94999999999999 2183.8,92.94999999999999 H2188.2 Q2189.8,92.94999999999999 2189.8,94.5 V99.5" fill="none" stroke="#7a7a7a" stroke-width="1.7"/><rect x="2180.2" y="99.3" width="11.6" height="6.4" rx="1.2" fill="#7a7a7a"/><circle cx="2185.1" cy="102.6" r="1.4" fill="#fff"/><rect x="2185.5" y="102.1" width="3.2" height="1" fill="#fff"/><path d="M2523.5,96.8 L2528,101.3 L2532.5,96.8" fill="none" stroke="#404040" stroke-width="1.1"/><polygon points="2549.00,91.10 2546.97,93.10 2544.12,93.12 2544.10,95.97 2542.10,98.00 2544.10,100.03 2544.12,102.88 2546.97,102.90 2549.00,104.90 2551.03,102.90 2553.88,102.88 2553.90,100.03 2555.90,98.00 2553.90,95.97 2553.88,93.12 2551.03,93.10" fill="#707070"/><circle cx="2549" cy="98" r="4.50" fill="#fff"/><circle cx="2549" cy="98" r="3.4" fill="none" stroke="#ed6b21" stroke-width="1.3" stroke-dasharray="1.67 1.0"/><rect x="2152.5" y="134.5" width="22.5" height="14.5" fill="#ff8000" stroke="#303030" stroke-width="0.8"/><path d="M2182.2,142.5 V137.5 Q2182.2,135.95 2183.8,135.95 H2188.2 Q2189.8,135.95 2189.8,137.5 V142.5" fill="none" stroke="#7a7a7a" stroke-width="1.7"/><rect x="2180.2" y="142.29999999999998" width="11.6" height="6.4" rx="1.2" fill="#7a7a7a"/><circle cx="2185.1" cy="145.6" r="1.4" fill="#fff"/><rect x="2185.5" y="145.1" width="3.2" height="1" fill="#fff"/><path d="M2523.5,139.8 L2528,144.3 L2532.5,139.8" fill="none" stroke="#404040" stroke-width="1.1"/><polygon points="2549.00,134.10 2546.97,136.10 2544.12,136.12 2544.10,138.97 2542.10,141.00 2544.10,143.03 2544.12,145.88 2546.97,145.90 2549.00,147.90 2551.03,145.90 2553.88,145.88 2553.90,143.03 2555.90,141.00 2553.90,138.97 2553.88,136.12 2551.03,136.10" fill="#707070"/><circle cx="2549" cy="141" r="4.50" fill="#fff"/><circle cx="2549" cy="141" r="3.4" fill="none" stroke="#ed6b21" stroke-width="1.3" stroke-dasharray="1.67 1.0"/><rect x="2157.5" y="178.5" width="13" height="13" fill="none" stroke="#7a7a7a" stroke-width="1"/><rect x="2158.5" y="180" width="3.5" height="3.5" fill="#ed6b21"/><line x1="2157.5" y1="183.5" x2="2170.5" y2="183.5" stroke="#7a7a7a" stroke-width="0.8"/><path d="M2182.2,185.5 V180.5 Q2182.2,178.95 2183.8,178.95 H2188.2 Q2189.8,178.95 2189.8,180.5 V185.5" fill="none" stroke="#7a7a7a" stroke-width="1.7"/><rect x="2180.2" y="185.29999999999998" width="11.6" height="6.4" rx="1.2" fill="#7a7a7a"/><circle cx="2185.1" cy="188.6" r="1.4" fill="#fff"/><rect x="2185.5" y="188.1" width="3.2" height="1" fill="#fff"/><path d="M2523.5,182.8 L2528,187.3 L2532.5,182.8" fill="none" stroke="#404040" stroke-width="1.1"/><polygon points="2549.00,177.10 2546.97,179.10 2544.12,179.12 2544.10,181.97 2542.10,184.00 2544.10,186.03 2544.12,188.88 2546.97,188.90 2549.00,190.90 2551.03,188.90 2553.88,188.88 2553.90,186.03 2555.90,184.00 2553.90,181.97 2553.88,179.12 2551.03,179.10" fill="#707070"/><circle cx="2549" cy="184" r="4.50" fill="#fff"/><circle cx="2549" cy="184" r="3.4" fill="none" stroke="#ed6b21" stroke-width="1.3" stroke-dasharray="1.67 1.0"/><path d="M2523.5,214.3 L2528,218.8 L2532.5,214.3" fill="none" stroke="#404040" stroke-width="1.1"/><path d="M2241.1,242.8 L2245.6,247.3 L2250.1,242.8" fill="none" stroke="#404040" stroke-width="1.1"/></svg>
<div class="abs" style="left:2145px;top:263px;width:414px;height:1138px;border:1px solid #828282;border-right:none;background:#fff"></div>
<div class="abs" style="left:2345px;top:265px;width:1px;height:23px;background:#e5e5e5"></div>
<div class="abs" style="left:2375px;top:265px;width:1px;height:23px;background:#e5e5e5"></div>
<div class="t " style="left:2152.6px;top:270.4px;font-size:12px;">Name</div>
<div class="t " style="left:2449.0px;top:270.4px;font-size:12px;">Editing</div>
<div class="t " style="left:2165.0px;top:293.0px;font-size:12px;">top.stl</div>
<svg class="abs" style="left:2340px;top:285px" width="150" height="30" viewBox="2340 285 150 30"><path d="M2353.5,299.3 Q2360.7,292.3 2367.9,299.3 Q2360.7,306.3 2353.5,299.3Z" fill="none" stroke="#808080" stroke-width="1.6"/><circle cx="2360.7" cy="299.3" r="2" fill="#808080"/><path d="M2462.5,297 H2460.5 V305 H2468.5 V301.5" fill="none" stroke="#808080" stroke-width="1.2"/><circle cx="2469" cy="296" r="2.6" fill="none" stroke="#ed6b21" stroke-width="1.5"/></svg>
<div class="abs" style="left:2145px;top:1408px;width:415px;height:30px;background:#e1e1e1"></div>
<div class="t " style="left:2324.5px;top:1418.1px;font-size:12px;font-weight:bold">Slice now</div>
<div class="abs" style="left:0;top:1438px;width:2560px;height:2px;background:#2e2e2e"></div>
<div class="abs" style="left:247px;top:1438px;width:48px;height:2px;background:#5a5a5a"></div>
</body></html>
